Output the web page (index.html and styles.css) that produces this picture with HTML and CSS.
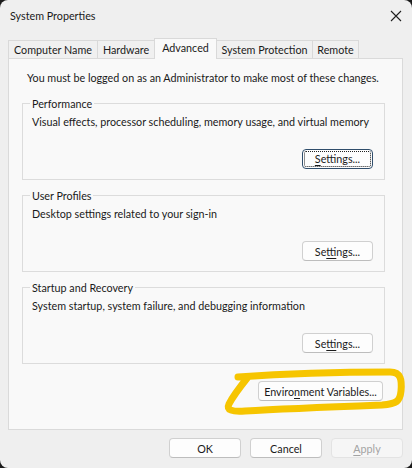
FILE: index.html
```html
<!DOCTYPE html>
<html lang="en">
<head>
<meta charset="utf-8">
<title>System Properties</title>
<link rel="stylesheet" href="styles.css">
</head>
<body>
<div class="window">
  <div class="titlebar">
    <span class="title">System Properties</span>
    <span class="close" aria-label="Close">
      <svg width="12" height="12" viewBox="0 0 12 12"><path d="M1 1 L11 11 M11 1 L1 11" stroke="#1f1f1f" stroke-width="1.1" fill="none"/></svg>
    </span>
  </div>

  <div class="tabs">
    <div class="tab tab-cn">Computer Name</div>
    <div class="tab tab-hw">Hardware</div>
    <div class="tab tab-adv selected">Advanced</div>
    <div class="tab tab-sp">System Protection</div>
    <div class="tab tab-rm">Remote</div>
  </div>

  <div class="panel">
    <p class="intro">You must be logged on as an Administrator to make most of these changes.</p>

    <fieldset class="group">
      <legend>Performance</legend>
      <p class="desc">Visual effects, processor scheduling, memory usage, and virtual memory</p>
      <div class="row"><button class="btn settings default"><span class="focus"><u>S</u>ettings...</span></button></div>
    </fieldset>

    <fieldset class="group">
      <legend>User Profiles</legend>
      <p class="desc">Desktop settings related to your sign-in</p>
      <div class="row"><button class="btn settings">Se<u>t</u>tings...</button></div>
    </fieldset>

    <fieldset class="group">
      <legend>Startup and Recovery</legend>
      <p class="desc">System startup, system failure, and debugging information</p>
      <div class="row"><button class="btn settings">Se<u>t</u>tings...</button></div>
    </fieldset>

    <div class="row env-row"><button class="btn env">Enviro<u>n</u>ment Variables...</button></div>
  </div>

  <div class="footer">
    <button class="btn action">OK</button>
    <button class="btn action">Cancel</button>
    <button class="btn action disabled"><u>A</u>pply</button>
  </div>

  <svg class="scribble" width="412" height="468" viewBox="0 0 412 468">
    <path d="M238 377 C 280 374, 340 372, 390 372 C 401 372, 402 380, 401 391 C 400 401, 397 404, 382 405 C 330 407, 280 409, 245 411 C 232 412, 226 410, 229 404 C 233 396, 240 387, 248 377" fill="none" stroke="#f6c500" stroke-width="7" stroke-linecap="round" stroke-linejoin="round"/>
  </svg>
</div>
</body>
</html>
```
FILE: styles.css
```css
* { box-sizing: border-box; }

html, body {
  margin: 0;
  padding: 0;
  background: #1b1b1b;
}

body {
  font-family: "Lato", "Liberation Sans", sans-serif;
  font-size: 10.75px;
  color: #1a1a1a;
}

.window {
  position: relative;
  width: 412px;
  height: 468px;
  background: #efefef;
  border-radius: 8px;
  overflow: hidden;
  display: flex;
  flex-direction: column;
}

/* title bar */
.titlebar {
  height: 32px;
  display: flex;
  align-items: center;
  justify-content: space-between;
  padding: 0 10px 0 10px;
  flex-shrink: 0;
}
.title {
  line-height: 16px;
  color: #1a1a1a;
}
.close {
  display: flex;
  width: 12px;
  height: 12px;
  margin-top: -1px;
}

/* tabs */
.tabs {
  display: flex;
  align-items: flex-end;
  height: 20px;
  margin-top: 6px;
  padding-left: 8px;
  flex-shrink: 0;
}
.tab {
  height: 18px;
  line-height: 17px;
  text-align: center;
  border: 1px solid #d9d9d9;
  border-bottom: none;
  border-right: none;
  background: #f0f0f0;
  white-space: nowrap;
}
.tab-cn { width: 89px; }
.tab-hw { width: 57px; }
.tab-adv { width: 63px; }
.tab-sp { width: 96px; }
.tab-rm { width: 47px; border-right: 1px solid #d9d9d9; }
.tab.selected {
  height: 21px;
  line-height: 17px;
  margin-bottom: -1px;
  background: #f9f9f9;
  position: relative;
  z-index: 1;
  border-right: 1px solid #d9d9d9;
  margin-right: -1px;
}

/* main panel */
.panel {
  height: 372px;
  margin: 0 9px 0 8px;
  background: #f9f9f9;
  border: 1px solid #dadada;
  padding: 11px 17px 0 13px;
  flex-shrink: 0;
}
.intro {
  margin: 0;
  padding-left: 5px;
  line-height: 16px;
  white-space: nowrap;
}

.group {
  margin: 8px 0 0 0;
  padding: 3px 11px 10px 9px;
  border: 1px solid #dcdcdc;
  min-width: 0;
}
.group:first-of-type { margin-top: 10px; }
.group legend {
  margin-left: -2px;
  padding: 0 2px;
  line-height: 15px;
}
.desc {
  margin: 0;
  line-height: 16px;
  white-space: nowrap;
}
.row {
  display: flex;
  justify-content: flex-end;
  margin-top: 19px;
}

/* buttons */
.btn {
  font: inherit;
  color: #1a1a1a;
  height: 20px;
  padding: 0;
  background: #fdfdfd;
  border: 1px solid #d0d0d0;
  border-bottom-color: #bdbdbd;
  border-radius: 4px;
  line-height: 17px;
  cursor: default;
}
.btn u { text-decoration-thickness: 1px; text-underline-offset: 2px; }
.settings { width: 71px; }
.default {
  border: 1px solid #2f4d6b;
  padding: 1px;
}
.focus {
  display: block;
  height: 100%;
  border: 1px dotted #222;
  border-radius: 2px;
  line-height: 14px;
}
.env-row {
  margin-top: 17px;
  padding-right: 2px;
}
.env { width: 125px; }

/* footer */
.footer {
  display: flex;
  justify-content: flex-end;
  gap: 9px;
  margin-top: 8px;
  padding-right: 9px;
}
.action { width: 72px; }
.disabled {
  color: #a3a3a3;
  background: #f6f6f6;
  border-color: #e3e3e3;
}

/* yellow highlighter annotation on top of the dialog */
.scribble {
  position: absolute;
  left: 0;
  top: 0;
  pointer-events: none;
}
```
